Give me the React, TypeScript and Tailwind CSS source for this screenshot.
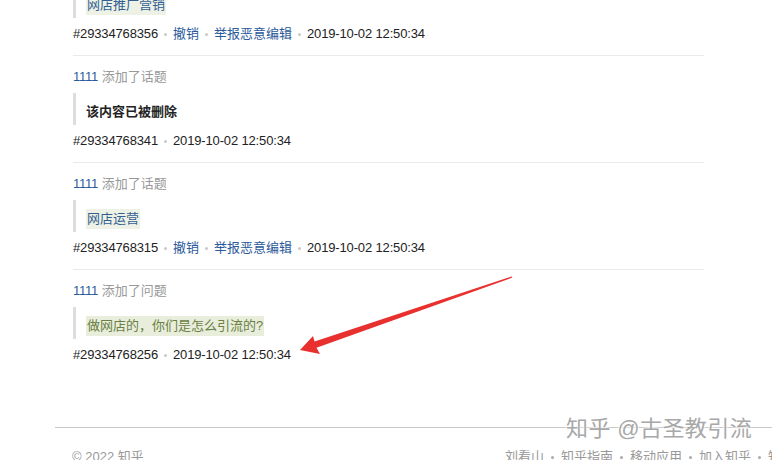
import React from "react";

const FONT = { fontFamily: '"Liberation Sans", Arial, "Noto Sans CJK SC", sans-serif' };

function Dot() {
  return <span className="inline-block w-[3px] h-[3px] rounded-full bg-[#c8c8c8] mx-[6px] align-middle" />;
}

type Item = {
  kind: string;
  quote: React.ReactNode;
  id: string;
  links: boolean;
};

function Meta({ id, links }: { id: string; links: boolean }) {
  return (
    <div className="mt-[6px] h-[20px] leading-[20px] text-[13px] text-[#222] flex items-center">
      <span className="tracking-[-0.15px]">#{id}</span>
      {links && (
        <>
          <Dot />
          <a className="text-[#2b5a9b]">撤销</a>
          <Dot />
          <a className="text-[#2b5a9b]">举报恶意编辑</a>
        </>
      )}
      <Dot />
      <span className="tracking-[-0.15px]">2019-10-02 12:50:34</span>
    </div>
  );
}

function Entry({ item, first }: { item: Item; first?: boolean }) {
  return (
    <div className={first ? "pt-[11px] pb-[11px]" : "border-t border-[#ebebeb] pt-[11px] pb-[11px]"}>
      <div className="h-[20px] leading-[20px] text-[13px]">
        <a className="text-[#2b5a9b] tracking-[-0.3px]">1111</a>
        <span className="text-[#999] ml-[4px]">{item.kind}</span>
      </div>
      <div className="mt-[6px] border-l-[3px] border-[#dddddd] pl-[10px] py-[6px] h-[32px]">
        {item.quote}
      </div>
      <Meta id={item.id} links={item.links} />
    </div>
  );
}

export default function App() {
  const items: Item[] = [
    {
      kind: "添加了话题",
      quote: (
        <span className="inline-block h-[20px] leading-[20px] text-[13px] text-[#335f93] bg-[#eef2e6] px-[1px]">网店推广营销</span>
      ),
      id: "29334768356",
      links: true,
    },
    {
      kind: "添加了话题",
      quote: <span className="inline-block h-[20px] leading-[20px] text-[13px] font-bold text-[#222]">该内容已被删除</span>,
      id: "29334768341",
      links: false,
    },
    {
      kind: "添加了话题",
      quote: (
        <span className="inline-block h-[20px] leading-[20px] text-[13px] text-[#335f93] bg-[#eef2e6] px-[1px]">网店运营</span>
      ),
      id: "29334768315",
      links: true,
    },
    {
      kind: "添加了问题",
      quote: (
        <span className="inline-block h-[20px] leading-[20px] text-[13px] text-[#6b7f45] bg-[#e8eedb] px-[1px]">做网店的，你们是怎么引流的?</span>
      ),
      id: "29334768256",
      links: false,
    },
  ];

  return (
    <div className="relative w-[772px] h-[460px] overflow-hidden bg-white" style={FONT}>
      <div className="ml-[73px] w-[631px] -mt-[51px]">
        {items.map((it, i) => (
          <Entry key={i} item={it} first={i === 0} />
        ))}
      </div>

      <div className="ml-[55px] mt-[51px] border-t border-[#c8c8c8]">
        <div className="flex pl-[17px] pt-[19px] text-[13px] leading-[20px] text-[#999] whitespace-nowrap">
          <div className="w-[433px] shrink-0">© 2022 知乎</div>
          <div className="flex items-center shrink-0">
            <span>刘看山</span>
            <span className="inline-block w-[3px] h-[3px] rounded-full bg-[#aaa] mx-[7px]" />
            <span>知乎指南</span>
            <span className="inline-block w-[3px] h-[3px] rounded-full bg-[#aaa] mx-[7px]" />
            <span>移动应用</span>
            <span className="inline-block w-[3px] h-[3px] rounded-full bg-[#aaa] mx-[7px]" />
            <span>加入知乎</span>
            <span className="inline-block w-[3px] h-[3px] rounded-full bg-[#aaa] mx-[7px]" />
            <span>知乎协议</span>
          </div>
        </div>
      </div>

      <div
        className="absolute left-[566px] top-[414px] text-[22px] leading-[30px] text-[#a8a8a8] whitespace-nowrap pointer-events-none tracking-[0.4px]"
        style={{ textShadow: "0 0 2px #fff, 0 0 2px #fff, 0 0 3px #fff" }}
      >
        知乎 @古圣教引流
      </div>

      <svg className="absolute left-0 top-0 pointer-events-none" width="772" height="460" viewBox="0 0 772 460">
        <polygon
          points="300,350 313,336 314.5,341.5 511.8,276.4 512.3,277.6 316.5,347.8 320,354"
          fill="#e8302f"
        />
      </svg>
    </div>
  );
}
